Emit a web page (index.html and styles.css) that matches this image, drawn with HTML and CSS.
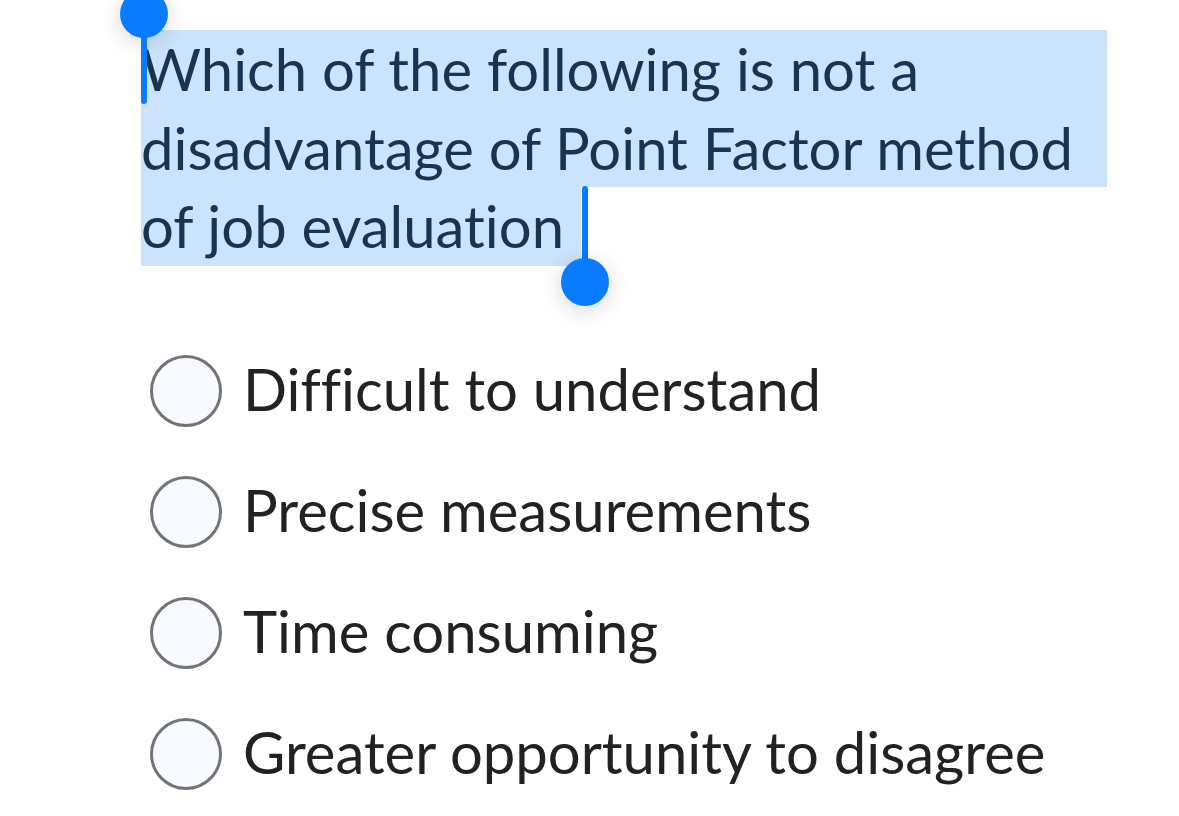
FILE: index.html
```html
<!DOCTYPE html>
<html>
<head>
<meta charset="utf-8">
<link rel="stylesheet" href="styles.css">
</head>
<body>
<main class="page">
  <div class="question">
    <span class="sel-line full">Which of the following is not a</span>
    <span class="sel-line full">disadvantage of Point Factor method</span>
    <span class="sel-line part">of job evaluation</span>
    <div class="handle handle-start"><div class="knob"></div><div class="bar"></div></div>
    <div class="handle handle-end"><div class="bar"></div><div class="knob"></div></div>
  </div>
  <ul class="options">
    <li class="option"><span class="radio"></span><span class="label">Difficult to understand</span></li>
    <li class="option"><span class="radio"></span><span class="label">Precise measurements</span></li>
    <li class="option"><span class="radio"></span><span class="label">Time consuming</span></li>
    <li class="option"><span class="radio"></span><span class="label">Greater opportunity to disagree</span></li>
  </ul>
</main>
</body>
</html>
```
FILE: styles.css
```css
html, body {
  margin: 0;
  padding: 0;
  background: #ffffff;
}
.page {
  padding: 30px 0 0 141px;
  font-family: Lato, "Noto Sans", sans-serif;
  font-variant-ligatures: none;
  font-feature-settings: "liga" 0, "dlig" 0;
}
.question {
  position: relative;
  width: 966px;
  font-size: 58px;
  line-height: 78.67px;
  color: #1a3350;
}
.sel-line {
  display: block;
  background: #cce3fd;
  white-space: nowrap;
}
.sel-line.part {
  display: inline-block;
  padding-right: 17px;
}
.handle {
  position: absolute;
  display: flex;
  flex-direction: column;
  align-items: center;
  width: 48px;
}
.knob {
  width: 48px;
  height: 48px;
  border-radius: 50%;
  background: #0a7aff;
  box-shadow: 0 4px 22px rgba(0, 0, 0, 0.16);
}
.bar {
  width: 6px;
  background: #0a7aff;
  border-radius: 3px;
}
.handle-start {
  left: -21px;
  top: -40px;
}
.handle-start .knob { margin-bottom: -4px; }
.handle-start .bar { height: 70px; }
.handle-end {
  left: 420px;
  top: 156px;
}
.handle-end .bar { height: 80px; margin-bottom: -8px; }
.options {
  list-style: none;
  margin: 0;
  padding: 89px 0 0 9px;
  display: flex;
  flex-direction: column;
  gap: 49px;
}
.option {
  display: flex;
  align-items: center;
  gap: 21px;
  height: 72px;
}
.radio {
  width: 66px;
  height: 66px;
  border: 3px solid #727578;
  border-radius: 50%;
  background: #f8faff;
  flex: none;
}
.label {
  font-size: 58px;
  color: #222222;
  padding-bottom: 6px;
}
```
